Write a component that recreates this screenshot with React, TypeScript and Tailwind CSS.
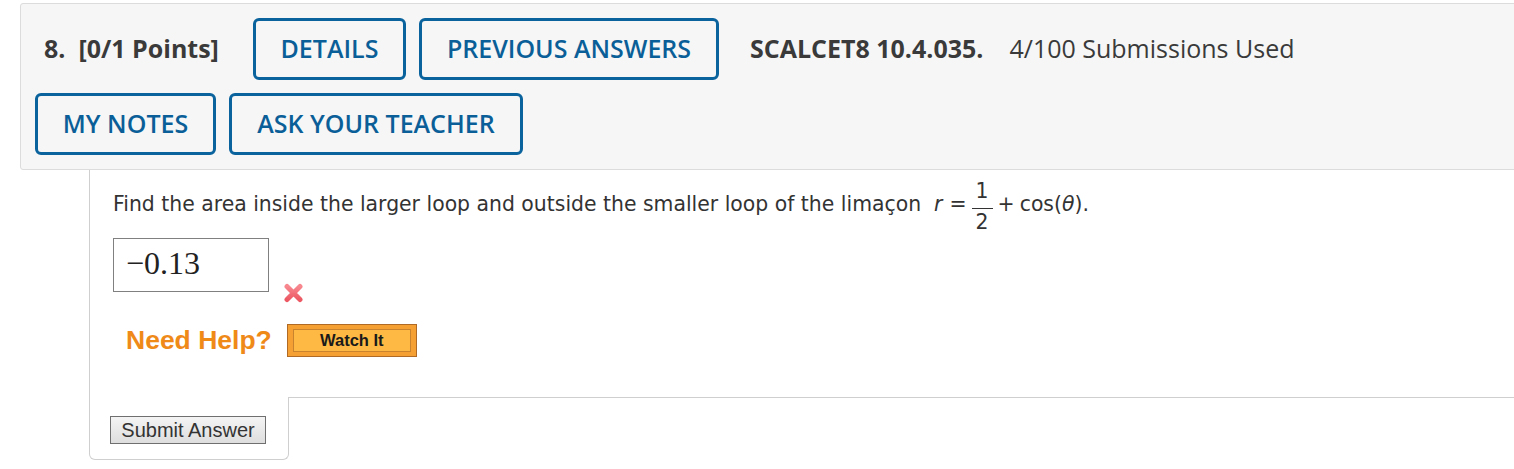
import React from 'react';

const HEAD_FONT = "font-['Open_Sans',sans-serif]";
const BODY_FONT = "font-['DejaVu_Sans',Verdana,sans-serif]";
const ARIAL = "font-['Liberation_Sans',Arial,sans-serif]";

const NavButton: React.FC<{ label: string; width: string; className?: string }> = ({ label, width, className = '' }) => (
  <button
    className={`${width} ${className} h-[62px] shrink-0 flex items-center justify-center rounded-[6px] border-[3px] border-[#0b639d] bg-transparent text-[25px] font-semibold text-[#0b5f98] ${HEAD_FONT}`}
  >
    {label}
  </button>
);

const WrongMark = () => (
  <svg width="21" height="20" viewBox="0 0 21 20" className="shrink-0">
    <defs>
      <linearGradient id="xg" x1="0" y1="0" x2="0" y2="1">
        <stop offset="0" stopColor="#f77a82" />
        <stop offset="1" stopColor="#ea4652" />
      </linearGradient>
    </defs>
    <path d="M4 3.5 L17 16.5 M17 3.5 L4 16.5" stroke="url(#xg)" strokeWidth="5" strokeLinecap="round" fill="none" opacity="0.9" />
  </svg>
);

export default function App() {
  return (
    <div className="w-full min-h-[469px] overflow-hidden bg-white text-[#333]">
      {/* question header */}
      <div className="ml-[20px] mt-[3px] w-[1520px] rounded-[3px] border border-[#dcdcdc] bg-[#f6f6f6] p-[14px]">
        <div className="flex items-center">
          <span className={`ml-[9px] w-[209px] shrink-0 whitespace-pre text-[25px] font-bold text-[#3a3a3a] ${HEAD_FONT}`}>
            {'8.  [0/1 Points]'}
          </span>
          <NavButton label="DETAILS" width="w-[153px]" />
          <NavButton label="PREVIOUS ANSWERS" width="w-[300px]" className="ml-[13px]" />
          <span className={`ml-[31px] text-[25px] font-bold text-[#3a3a3a] ${HEAD_FONT}`}>SCALCET8 10.4.035.</span>
          <span className={`ml-[26px] text-[25px] text-[#3a3a3a] ${HEAD_FONT}`}>4/100 Submissions Used</span>
        </div>
        <div className="mt-[13px] flex gap-[13px]">
          <NavButton label="MY NOTES" width="w-[181px]" />
          <NavButton label="ASK YOUR TEACHER" width="w-[294px]" />
        </div>
      </div>

      {/* question body */}
      <div className="ml-[89px] h-[227px] border-l border-[#cfcfcf] pl-[23px] pt-[11px]">
        <div className={`flex items-start text-[20.4px] leading-none text-[#333] ${BODY_FONT}`}>
          <span className="mt-[13px] whitespace-nowrap">Find the area inside the larger loop and outside the smaller loop of the limaçon</span>
          <span className="mt-[13px] ml-[13px] italic">r</span>
          <span className="mt-[13px] ml-[7px]">=</span>
          <span className="ml-[5px] flex flex-col items-center">
            <span className="block pb-[7px] leading-none">1</span>
            <span className="block h-px w-[21px] bg-[#333]" />
            <span className="block pt-[3px] leading-none">2</span>
          </span>
          <span className="mt-[13px] ml-[5px]">+</span>
          <span className="mt-[13px] ml-[5px] whitespace-nowrap">
            cos(<span className="italic">θ</span>).
          </span>
        </div>

        <div className="mt-[5px] flex items-start">
          <div className="flex h-[54px] w-[156px] items-center border border-[#808080] bg-white pb-[3px] pl-[12px]">
            <span className="font-['Liberation_Serif','Times_New_Roman',serif] text-[32px] leading-none text-[#222]">−0.13</span>
          </div>
          <div className="ml-[14px] mt-[45px]">
            <WrongMark />
          </div>
        </div>

        <div className="mt-[21px] flex h-[33px] items-center">
          <span className={`ml-[13px] text-[26.5px] font-bold leading-none text-[#ef8a19] ${ARIAL}`}>Need Help?</span>
          <span className="ml-[15px] flex h-[33px] w-[130px] border border-[#b06a26] bg-[#f5a033] px-[5px] py-[4px]">
            <span className={`flex flex-1 items-center justify-center border border-[#c9832f] bg-[#fdb943] text-[16.5px] font-bold text-[#1a1a1a] ${ARIAL}`}>
              Watch It
            </span>
          </span>
        </div>
      </div>

      {/* submit row */}
      <div className="ml-[89px] flex">
        <div className="h-[63px] w-[200px] shrink-0 rounded-b-[6px] border-x border-b border-[#cfcfcf] pl-[20px] pt-[19px]">
          <button
            className={`h-[28px] w-[156px] border border-[#6f6f6f] bg-gradient-to-b from-[#f4f4f4] to-[#dedede] text-[20px] leading-none text-[#333] ${ARIAL}`}
          >
            Submit Answer
          </button>
        </div>
        <div className="w-[1225px] shrink-0 border-t border-[#cfcfcf]" />
      </div>
    </div>
  );
}
